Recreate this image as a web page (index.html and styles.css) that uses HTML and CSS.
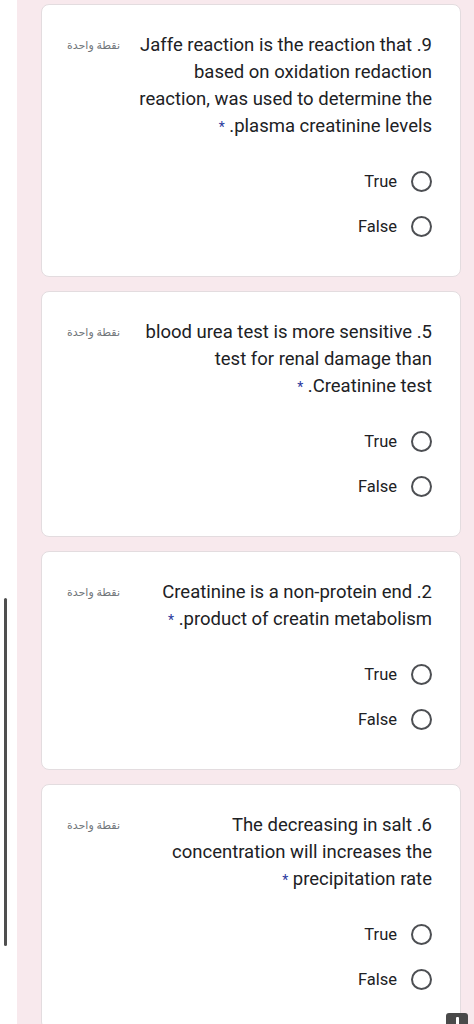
FILE: index.html
```html
<!DOCTYPE html>
<html lang="ar" dir="ltr">
<head>
<meta charset="utf-8">
<title>Form</title>
<link rel="stylesheet" href="styles.css">
</head>
<body>
<div class="page">
  <div class="column">
    <div class="card">
      <div class="q-head" dir="rtl">
        <div class="q-title">9. Jaffe reaction is the reaction that<br>based on oxidation redaction<br>reaction, was used to determine the<br>plasma creatinine levels. <span class="req">*</span></div>
        <div class="q-points">نقطة واحدة</div>
      </div>
      <div class="options" dir="rtl">
        <div class="opt"><span class="radio"></span><span class="opt-label">True</span></div>
        <div class="opt"><span class="radio"></span><span class="opt-label">False</span></div>
      </div>
    </div>
    <div class="card">
      <div class="q-head" dir="rtl">
        <div class="q-title">5. blood urea test is more sensitive<br>test for renal damage than<br>Creatinine test. <span class="req">*</span></div>
        <div class="q-points">نقطة واحدة</div>
      </div>
      <div class="options" dir="rtl">
        <div class="opt"><span class="radio"></span><span class="opt-label">True</span></div>
        <div class="opt"><span class="radio"></span><span class="opt-label">False</span></div>
      </div>
    </div>
    <div class="card">
      <div class="q-head" dir="rtl">
        <div class="q-title">2. Creatinine is a non-protein end<br>product of creatin metabolism. <span class="req">*</span></div>
        <div class="q-points">نقطة واحدة</div>
      </div>
      <div class="options" dir="rtl">
        <div class="opt"><span class="radio"></span><span class="opt-label">True</span></div>
        <div class="opt"><span class="radio"></span><span class="opt-label">False</span></div>
      </div>
    </div>
    <div class="card">
      <div class="q-head" dir="rtl">
        <div class="q-title">6. The decreasing in salt<br>concentration will increases the<br>precipitation rate <span class="req">*</span></div>
        <div class="q-points">نقطة واحدة</div>
      </div>
      <div class="options" dir="rtl">
        <div class="opt"><span class="radio"></span><span class="opt-label">True</span></div>
        <div class="opt"><span class="radio"></span><span class="opt-label">False</span></div>
      </div>
    </div>
  </div>
</div>
<div class="scroll-thumb"></div>
<div class="float-btn"><span class="float-mark"></span></div>
</body>
</html>
```
FILE: styles.css
```css
html, body {
  margin: 0;
  padding: 0;
  background: #ffffff;
  height: 1024px;
  overflow: hidden;
}
body {
  font-family: Roboto, "DejaVu Sans", sans-serif;
  color: #202124;
}
.page {
  padding-left: 17px;
}
.column {
  background: #f8e9ed;
  padding: 4px 0 0 24px;
  display: flex;
  flex-direction: column;
  gap: 14px;
  min-height: 1100px;
}
.card {
  background: #ffffff;
  border: 1px solid #e3dcdf;
  border-radius: 8px;
  padding: 27px 28px 27px 25px;
  box-sizing: content-box;
  width: 365px;
}
.q-head {
  display: flex;
  align-items: flex-start;
  gap: 12px;
}
.q-title {
  flex: 1;
  font-size: 18.5px;
  line-height: 27px;
  white-space: nowrap;
}
.req {
  color: #2b3a9e;
  font-size: 14px;
  line-height: 0;
}
.q-points {
  font-size: 11px;
  line-height: 27px;
  height: 27px;
  color: #70757a;
  white-space: nowrap;
}
.options {
  margin-top: 19px;
  display: flex;
  flex-direction: column;
}
.opt {
  height: 45px;
  display: flex;
  align-items: center;
  gap: 14px;
}
.radio {
  width: 17px;
  height: 17px;
  border: 2px solid #4d4f53;
  border-radius: 50%;
  flex: none;
}
.opt-label {
  font-size: 16.5px;
}
.scroll-thumb {
  position: absolute;
  left: 4px;
  top: 598px;
  width: 3px;
  height: 348px;
  background: #4f4f4f;
  border-radius: 2px;
}
.float-btn {
  position: fixed;
  left: 446px;
  top: 1013px;
  width: 22px;
  height: 16px;
  background: #4a4a4a;
  border-radius: 3px;
  display: flex;
  justify-content: center;
}
.float-mark {
  margin-top: 4px;
  width: 3px;
  height: 9px;
  background: #ffffff;
  border-radius: 1px;
}
```
